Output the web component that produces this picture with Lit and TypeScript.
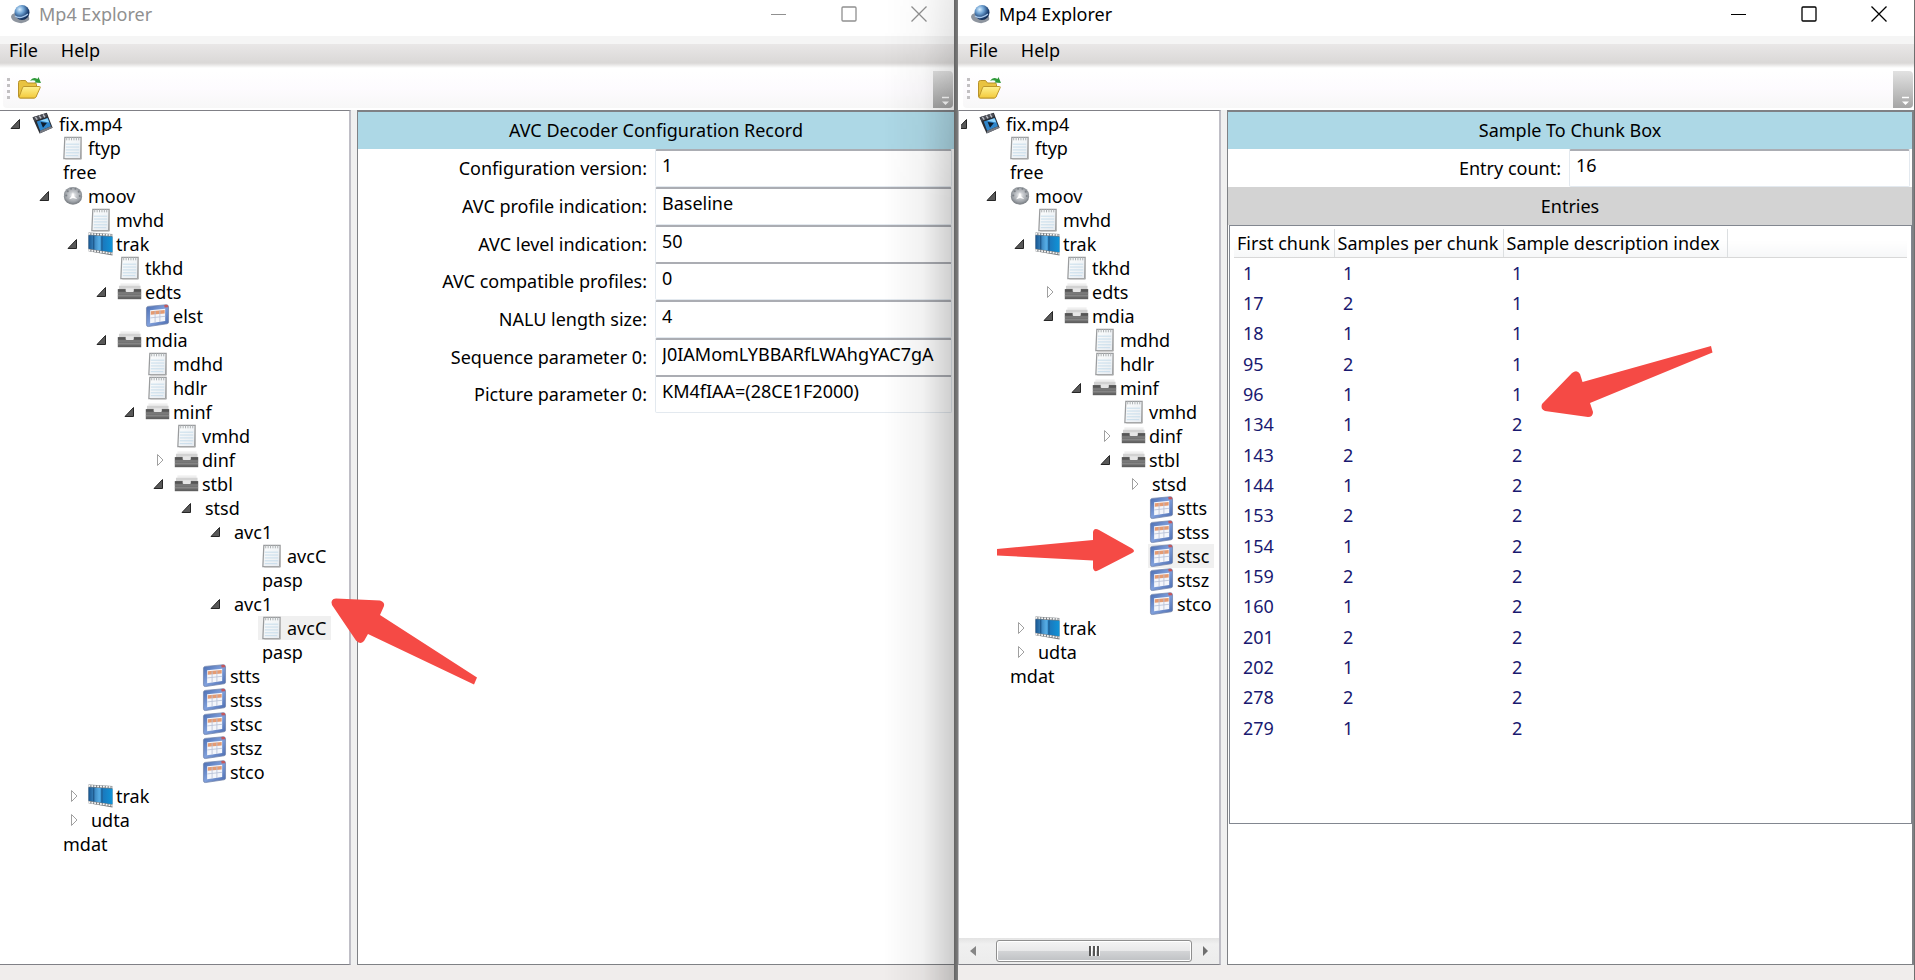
import { LitElement, html, css, svg, nothing } from "lit";
import { customElement, property, state } from "lit/decorators.js";
import { classMap } from "lit/directives/class-map.js";

type IconName = "file" | "doc" | "disc" | "film" | "drawer" | "grid";

interface TreeRow {
  depth: number;
  name: string;
  icon?: IconName;
  fold?: "open" | "closed";
}

const row = (depth: number, name: string, icon?: IconName, fold?: "open" | "closed"): TreeRow => ({
  depth,
  name,
  icon,
  fold,
});

const LEFT_TREE: TreeRow[] = [
  row(0, "fix.mp4", "file", "open"),
  row(1, "ftyp", "doc"),
  row(1, "free"),
  row(1, "moov", "disc", "open"),
  row(2, "mvhd", "doc"),
  row(2, "trak", "film", "open"),
  row(3, "tkhd", "doc"),
  row(3, "edts", "drawer", "open"),
  row(4, "elst", "grid"),
  row(3, "mdia", "drawer", "open"),
  row(4, "mdhd", "doc"),
  row(4, "hdlr", "doc"),
  row(4, "minf", "drawer", "open"),
  row(5, "vmhd", "doc"),
  row(5, "dinf", "drawer", "closed"),
  row(5, "stbl", "drawer", "open"),
  row(6, "stsd", undefined, "open"),
  row(7, "avc1", undefined, "open"),
  row(8, "avcC", "doc"),
  row(8, "pasp"),
  row(7, "avc1", undefined, "open"),
  row(8, "avcC", "doc"),
  row(8, "pasp"),
  row(6, "stts", "grid"),
  row(6, "stss", "grid"),
  row(6, "stsc", "grid"),
  row(6, "stsz", "grid"),
  row(6, "stco", "grid"),
  row(2, "trak", "film", "closed"),
  row(2, "udta", undefined, "closed"),
  row(1, "mdat"),
];

const RIGHT_TREE: TreeRow[] = [
  row(0, "fix.mp4", "file", "open"),
  row(1, "ftyp", "doc"),
  row(1, "free"),
  row(1, "moov", "disc", "open"),
  row(2, "mvhd", "doc"),
  row(2, "trak", "film", "open"),
  row(3, "tkhd", "doc"),
  row(3, "edts", "drawer", "closed"),
  row(3, "mdia", "drawer", "open"),
  row(4, "mdhd", "doc"),
  row(4, "hdlr", "doc"),
  row(4, "minf", "drawer", "open"),
  row(5, "vmhd", "doc"),
  row(5, "dinf", "drawer", "closed"),
  row(5, "stbl", "drawer", "open"),
  row(6, "stsd", undefined, "closed"),
  row(6, "stts", "grid"),
  row(6, "stss", "grid"),
  row(6, "stsc", "grid"),
  row(6, "stsz", "grid"),
  row(6, "stco", "grid"),
  row(2, "trak", "film", "closed"),
  row(2, "udta", undefined, "closed"),
  row(1, "mdat"),
];

const AVC_FIELDS: [string, string][] = [
  ["Configuration version:", "1"],
  ["AVC profile indication:", "Baseline"],
  ["AVC level indication:", "50"],
  ["AVC compatible profiles:", "0"],
  ["NALU length size:", "4"],
  ["Sequence parameter 0:", "J0IAMomLYBBARfLWAhgYAC7gA"],
  ["Picture parameter 0:", "KM4fIAA=(28CE1F2000)"],
];

const CHUNKS: [number, number, number][] = [
  [1, 1, 1],
  [17, 2, 1],
  [18, 1, 1],
  [95, 2, 1],
  [96, 1, 1],
  [134, 1, 2],
  [143, 2, 2],
  [144, 1, 2],
  [153, 2, 2],
  [154, 1, 2],
  [159, 2, 2],
  [160, 1, 2],
  [201, 2, 2],
  [202, 1, 2],
  [278, 2, 2],
  [279, 1, 2],
];

const gradients = svg`<defs>
  <linearGradient id="film" x1="0" x2="1"><stop offset="0" stop-color="#175590"/><stop offset=".45" stop-color="#58aee6"/><stop offset=".6" stop-color="#1a78bd"/><stop offset="1" stop-color="#0f94d8"/></linearGradient>
  <linearGradient id="drawer" x1="0" x2="0" y1="0" y2="1"><stop offset="0" stop-color="#4c4c4c"/><stop offset=".6" stop-color="#777"/><stop offset="1" stop-color="#5a5a5a"/></linearGradient>
  <linearGradient id="grid" x1="0" x2="1" y1="0" y2="1"><stop offset="0" stop-color="#4a6cb0"/><stop offset=".5" stop-color="#7f9fdb"/><stop offset="1" stop-color="#4868ac"/></linearGradient>
  <radialGradient id="disc"><stop offset="0" stop-color="#fff"/><stop offset=".35" stop-color="#c9ccd0"/><stop offset=".75" stop-color="#a7abb0"/><stop offset="1" stop-color="#8b9096"/></radialGradient>
  <linearGradient id="paper" x1="0" x2="1" y1="0" y2="1"><stop offset="0" stop-color="#fdfefe"/><stop offset="1" stop-color="#e6ebf0"/></linearGradient>
  <linearGradient id="fold" x1="0" x2="0" y1="0" y2="1"><stop offset="0" stop-color="#fff28f"/><stop offset="1" stop-color="#f3c93c"/></linearGradient>
</defs>`;

const ICONS: Record<IconName, unknown> = {
  file: svg`
    <path d="M1 5.5 16 .8 17.5 5 22 16.500 8.500 22.500 5.500 16Z" fill="#2b2d33"/>
    <path d="M1.500 5.500 15.500 1.200 16.500 4.500 3 9.500Z" fill="#4a4d55"/>
    <path d="m4 5 2 3M8 3.700l2 3M12 2.500l2 3" stroke="#b9bcc4" stroke-width="1.500"/>
    <path d="M5.500 10 17 6.200 20.200 14.800 9 19.500Z" fill="#2f86cb"/>
    <path d="M9 9 16.500 6.500 18.500 11Z" fill="#8fd4fb"/>
    <path d="m9.500 10.500 6.500 1-4 5z" fill="#0e1c2c"/>
    <path d="m9 19.500 11.200-4.700 1.800 1.700-13.500 6z" fill="#767a83"/>`,
  doc: svg`
    <path d="M4.500 1.500h17l-.5 22H3.500z" fill="url(#paper)" stroke="#9a9c9e" stroke-width="1.300"/>
    <path d="M21.800 2v22H5" fill="none" stroke="#b5b5b5"/>
    <path d="M6.500 1v3.500M9 1v3.500M11.500 1v3.500M14 1v3.500M16.500 1v3.500M19 1v3.500" stroke="#a9adb0"/>
    <path d="M5.500 8.500h14M5.500 11.500h14M5.500 14.500h14M5.500 17.500h14M5.500 20.500h13" stroke="#c5dbea"/>`,
  disc: svg`
    <ellipse cx="13" cy="13" rx="9.500" ry="8.500" fill="#83878c"/>
    <ellipse cx="13" cy="11.500" rx="9.500" ry="8.500" fill="url(#disc)"/>
    <g fill="#7c8187"><circle cx="7.500" cy="7.500" r="1.100"/><circle cx="11" cy="5" r="1"/><circle cx="15.500" cy="5" r="1"/><circle cx="19" cy="8" r="1.100"/><circle cx="6" cy="12" r="1.100"/><circle cx="20" cy="12.500" r="1"/></g>
    <path d="M13 8.500 14.500 13l3 2.500-4.500-.8-4 1.300 2.500-3.500z" fill="#fff"/>`,
  film: svg`
    <path d="M0 .5 25 2v22.500L0 20z" fill="#74797d"/>
    <path d="M0 3.500 25 5v16L0 17.500z" fill="url(#film)"/>
    <path d="M0 1.900 25 3.300M0 18.900l25 3.600" stroke="#f6f6f6" stroke-width="1.800" stroke-dasharray="2 1"/>
    <path d="M5.500 3.800V18M14 4.400v15" stroke="#174d7d"/>`,
  drawer: svg`
    <path d="M3 3.500h20v6H3z" fill="#efefef"/><path d="M1.500 6h22.500v5h-22.500z" fill="#d2d2d2"/>
    <path d="M.3 9.500h24.400v10.500H.3z" fill="url(#drawer)"/>
    <path d="M8.500 8.500h8.500v3q0 1-1 1H9.500q-1 0-1-1z" fill="#e6e6e6"/>
    <path d="M.3 13.500h24.400M.3 16.500h24.400" stroke="#9a9a9a" stroke-width=".7"/>`,
  grid: svg`
    <path d="M3 2.500 21.500.8q2.500 0 2.500 2v16q0 1.500-1.500 1.800L3 23.500q-2 0-2-2V4.500q0-1.800 2-2z" fill="url(#grid)" stroke="#7385ad" stroke-width=".8"/>
    <path d="M4.800 6.500 20.500 5v12.800L4.800 20z" fill="#f4f6fb"/>
    <path d="M5.500 7.500 20 6.200v3.800L5.500 11.300z" fill="#e59b72"/>
    <path d="M10 7.500v12M15 7v11.800M5 14.500l15.500-1.700" stroke="#b8c1d8" stroke-width=".9"/>
    <path d="m19.500 1 2.500-.2q1.500 0 1.500 1.500v1l-3.500.3z" fill="#c4585c"/>`,
};

/** Hierarchical list of the boxes found in the opened file. */
@customElement("box-tree")
export class BoxTree extends LitElement {
  @property({ attribute: false }) rows: TreeRow[] = [];
  @property({ type: Number }) selected = -1;

  static styles = css`
    :host { display: block; }
    .tree { list-style: none; margin: 0; padding: 0; }
    .item { display: flex; align-items: center; height: 24px; white-space: nowrap; }
    .fold { box-sizing: border-box; width: 30px; height: 24px; flex: none; padding: 0 0 0 10px; border: 0; background: none; text-align: left; }
    .fold svg { display: block; }
    .label { display: flex; align-items: center; gap: 3px; height: 24px; padding: 0 5px 0 4px; }
    .label.with-icon { padding-left: 1px; }
    .label.selected { background: #f0f0f0; }
    .icon { width: 25px; height: 24px; flex: none; overflow: visible; }
  `;

  render() {
    return html`<ul class="tree" role="tree">
      ${this.rows.map(
        (r, i) => html`<li class="item" role="treeitem" aria-level=${r.depth + 1}
          aria-selected=${i === this.selected ? "true" : "false"}
          style="padding-left:${Math.round((r.depth * 57) / 2)}px" @click=${() => (this.selected = i)}>
          ${r.fold
            ? html`<button class="fold" aria-label="Toggle ${r.name}">
                <svg width="12" height="14" viewBox="0 0 12 14">
                  ${r.fold === "open"
                    ? svg`<path d="M1 11.500h8.500v-9z" fill="#595959" stroke="#262626"/>`
                    : svg`<path d="M4.500 1.500v11L10 7z" fill="#fff" stroke="#a0a0a0"/>`}
                </svg>
              </button>`
            : html`<span class="fold"></span>`}
          <span class=${classMap({ label: true, "with-icon": !!r.icon, selected: i === this.selected })}>
            ${r.icon ? html`<svg class="icon" viewBox="0 0 25 25" aria-hidden="true">${gradients}${ICONS[r.icon]}</svg>` : nothing}
            <span>${r.name}</span>
          </span>
        </li>`
      )}
    </ul>`;
  }
}

/** Window frame: caption, menu, toolbar, tree pane, detail pane, status strip. */
@customElement("explorer-window")
export class ExplorerWindow extends LitElement {
  @property({ attribute: false }) rows: TreeRow[] = [];
  @property({ type: Number }) selected = -1;
  @property({ type: Boolean, reflect: true }) active = false;

  static styles = css`
    :host { display: flex; flex-direction: column; position: relative; min-width: 0; height: 100%; overflow: hidden; background: #fff; --inset: 0px; --tree: 351px; }
    :host([active]) { --inset: 2px; --tree: 263px; border-right: 1px solid #6f6f6f; }
    button { font: inherit; color: inherit; border: 0; background: none; padding: 0; }
    .caption { display: flex; align-items: center; height: 27px; padding: 0 0 9px calc(11px + var(--inset)); color: #909090; }
    :host([active]) .caption { color: #000; }
    .logo { width: 20px; height: 20px; margin-right: 8px; }
    .title { flex: 1; }
    .control { width: 70px; height: 27px; display: grid; place-items: center; }
    .menu { display: flex; gap: 23px; height: 33px; padding-left: calc(9px + var(--inset)); flex: none;
      background: linear-gradient(#f5f5f5 0 8px, #e9e7e7 8px, #dad8d7 27px, #fff 32px); }
    .menu button { height: 28px; }
    .toolbar { display: flex; align-items: center; height: 37px; margin: 2px 1px 2px calc(3px + var(--inset)); flex: none;
      border-radius: 4px; background: linear-gradient(#fff, #fdfbfe 50%, #f7f7f7); }
    .grip { width: 3px; height: 21px; margin: 0 7px 2px 4px; background: repeating-linear-gradient(#c2c0c2 0 3px, transparent 3px 6px); }
    .open { margin-bottom: 3px; }
    .open svg { display: block; }
    .overflow { margin-left: auto; width: 20px; height: 37px; border-radius: 0 4px 4px 0; background: linear-gradient(#e2e2e2, #a5a5a5); }
    .overflow svg { display: block; }
    .work { display: grid; grid-template-columns: var(--tree) 6px minmax(0, 1fr); flex: 1; min-height: 0; background: #f0f0f0; }
    .nav { display: flex; flex-direction: column; min-width: 0; border: solid #808086; border-width: 1px 2px 1px 0; border-right-color: #bfbec6; background: #fff; }
    :host([active]) .nav { border-left: 1px solid #b5b5b8; }
    .viewport { flex: 1; min-height: 0; overflow: hidden; padding-top: 1px; }
    :host([active]) .viewport { margin-left: 2px; }
    :host([active]) box-tree { margin-left: -14px; }
    .scroll { display: flex; align-items: center; height: 26px; background: linear-gradient(#e3e3e3, #f0f0f0 6px, #ececec); }
    .arrow { width: 27px; height: 26px; display: grid; place-items: center; flex: none; }
    .arrow:first-child { margin-right: 10px; }
    .thumb { flex: 1; height: 22px; box-sizing: border-box; display: flex; justify-content: center; align-items: center; gap: 1px;
      border: 1px solid #8f8f8f; border-radius: 3px; box-shadow: inset 0 0 0 1px #fff; background: linear-gradient(#f4f4f4, #e8e8e9 50%, #d3d4d6 50%, #bfc1c4); }
    .thumb i { width: 2px; height: 10px; border-right: 1px solid #fff; background: #555; }
    .detail { min-width: 0; overflow: hidden; border: solid #7f8185; border-width: 2px 0 1px 1px; background: #fff; }
    :host([active]) .detail { border-right: 2px solid #7f8185; }
    .status { height: 15px; flex: none; background: #f0edec; }
    .shade { position: absolute; top: 0; right: 0; width: 70px; height: 100%; pointer-events: none;
      background: linear-gradient(90deg, transparent, rgba(0, 0, 0, 0.05) 55%, rgba(0, 0, 0, 0.2));
      mask-image: linear-gradient(rgba(0, 0, 0, 0.4), #000 200px); }
    :host([active]) .shade { display: none; }
  `;

  render() {
    return html`
      <header class="caption">
        <svg class="logo" viewBox="0 0 20 20" aria-hidden="true">
          <defs><radialGradient id="orb" cx=".35" cy=".3" r=".8"><stop offset="0" stop-color="#d8efff"/><stop offset=".35" stop-color="#6c9fd0"/><stop offset=".7" stop-color="#1f4375"/><stop offset="1" stop-color="#0c1d3d"/></radialGradient></defs>
          <path d="M0 13q0-3 4-4l12 1q3 2 2 6-6 5-13 2-4-1-5-5z" fill="#8e959f"/>
          <circle cx="11" cy="8.500" r="7.500" fill="url(#orb)"/>
          <path d="M4 12q5 4 13-2" stroke="#a9c8ea" stroke-width="1.500" fill="none"/>
        </svg>
        <span class="title">Mp4 Explorer</span>
        <button class="control" aria-label="Minimize"><svg width="16" height="16" fill="none" stroke="currentColor"><path d="M0 8.500h15"/></svg></button>
        <button class="control" aria-label="Maximize"><svg width="16" height="16" fill="none" stroke="currentColor"><rect x="1" y="1" width="14" height="14" rx="1" stroke-width="1.300"/></svg></button>
        <button class="control" aria-label="Close"><svg width="16" height="16" fill="none" stroke="currentColor"><path d="m.5.5 15 15m0-15-15 15" stroke-width="1.300"/></svg></button>
      </header>
      <nav class="menu"><button>File</button><button>Help</button></nav>
      <div class="toolbar">
        <span class="grip"></span>
        <button class="open" aria-label="Open">
          <svg width="25" height="24" viewBox="0 0 25 24">
            ${gradients}
            <path d="M1.500 6.500q0-2 2-2h5l2 2.500h7.500q1.500 0 1.500 1.500V20l-2 2h-14q-2 0-2-2z" fill="#e9c341" stroke="#b8922a"/>
            <path d="M7 10.500h15.500q1.200 0 .6 1.300l-4 9q-.5 1.200-1.800 1.200H3q-1.200 0-.8-1.300l3.300-8.900q.4-1.300 1.500-1.300z" fill="url(#fold)" stroke="#bf982c"/>
            <path d="M13 5q3-5 7.500-2l1-2L24 7l-6.500-.5 1.200-1.500Q16 3.500 13 5z" fill="#2f9a3a"/>
          </svg>
        </button>
        <button class="overflow" aria-label="More tools">
          <svg width="20" height="37"><path d="M9 26.500h7" stroke="#fff" stroke-width="1.500"/><path d="M9 30.500h7L12.500 34z" fill="#fff"/></svg>
        </button>
      </div>
      <main class="work">
        <section class="nav">
          <div class="viewport"><box-tree .rows=${this.rows} .selected=${this.selected}></box-tree></div>
          ${this.active
            ? html`<div class="scroll">
                <button class="arrow" aria-label="Scroll left"><svg width="14" height="12"><path d="M10 1v10L4 6z" fill="#858585"/></svg></button>
                <div class="thumb"><i></i><i></i><i></i></div>
                <button class="arrow" aria-label="Scroll right"><svg width="14" height="12"><path d="M4 1v10l5-5z" fill="#6f6f6f"/></svg></button>
              </div>`
            : nothing}
        </section>
        <span></span>
        <section class="detail"><slot></slot></section>
      </main>
      <footer class="status"></footer>
      <div class="shade"></div>
    `;
  }
}

@customElement("app-root")
export class AppRoot extends LitElement {
  @state() private fields = AVC_FIELDS;
  @state() private chunks = CHUNKS;

  static styles = css`
    :host { display: grid; grid-template-columns: minmax(0, 954fr) 4px minmax(0, 957fr); position: relative; height: 100vh; overflow: hidden;
      font: 18px/22px "Noto Sans", "Open Sans", sans-serif; color: #000; background: #fff; }
    .divider { background: linear-gradient(90deg, #636363, #7d7d7d); }
    .heading { margin: 0; height: 37px; line-height: 36px; font-size: 18px; font-weight: 400; text-align: center; background: #add8e6; }
    .heading.sub { height: 38px; line-height: 38px; background: #d3d3d3; }
    .field { display: grid; grid-template-columns: 1fr 1fr; height: 38px; padding-right: 2px; }
    .field:nth-of-type(3n) { height: 37px; }
    .name { line-height: 38px; padding-right: 8px; text-align: right; white-space: nowrap; }
    .value { min-width: 0; box-sizing: border-box; width: 100%; height: 100%; margin: 0; padding: 0 4px 8px 6px; font: inherit; color: inherit; background: #fff;
      border: 1px solid #e3e9ef; border-top: 2px solid #abadb3; border-radius: 2px; outline: 0; }
    .list { box-sizing: border-box; min-height: 599px; margin: 0 0 0 1px; padding: 3px 4px; border: 1px solid #828790; }
    .table { width: 100%; table-layout: fixed; border-collapse: collapse; }
    .c1 { width: 100px; } .c2 { width: 169px; } .c3 { width: 224px; }
    th { box-sizing: border-box; height: 28px; padding: 0 0 0 3px; font-weight: 400; text-align: left; white-space: nowrap;
      border-right: 1px solid #dcdfe1; border-bottom: 1px solid #d8d8d8; background: linear-gradient(#fff 40%, #f6f7f8); }
    th:last-child { border-right: 0; }
    td { height: 30px; padding: 0 0 0 9px; color: #191970; }
    tr:nth-child(3n) td { height: 31px; }
    .pointer { position: absolute; fill: #f54a45; pointer-events: none; }
    .at-avcc { left: 330px; top: 598px; }
    .at-stsc { left: 996px; top: 528px; }
    .at-index { left: 1540px; top: 345px; }
  `;

  render() {
    return html`
      <explorer-window .rows=${LEFT_TREE} .selected=${21}>
        <h2 class="heading">AVC Decoder Configuration Record</h2>
        ${this.fields.map(
          ([name, value], i) => html`<div class="field">
            <label class="name" for="avc-${i}">${name}</label>
            <input class="value" id="avc-${i}" readonly .value=${value} />
          </div>`
        )}
      </explorer-window>
      <div class="divider"></div>
      <explorer-window active .rows=${RIGHT_TREE} .selected=${18}>
        <h2 class="heading">Sample To Chunk Box</h2>
        <div class="field">
          <label class="name" for="count">Entry count:</label>
          <input class="value" id="count" readonly .value=${String(this.chunks.length)} />
        </div>
        <h3 class="heading sub">Entries</h3>
        <section class="list">
          <table class="table">
            <colgroup><col class="c1" /><col class="c2" /><col class="c3" /><col /></colgroup>
            <thead>
              <tr><th>First chunk</th><th>Samples per chunk</th><th>Sample description index</th><th></th></tr>
            </thead>
            <tbody>
              ${this.chunks.map((c) => html`<tr>${c.map((n) => html`<td>${n}</td>`)}<td></td></tr>`)}
            </tbody>
          </table>
        </section>
      </explorer-window>
      <svg class="pointer at-avcc" width="150" height="90" viewBox="330 598 150 90" aria-hidden="true">
        <path d="M336 598.500 380 600.500Q385 602 384 606L380 615 477 677.500 474 684.500 368 634 364 641Q360 645 356 640.500L332 605Q330 599 336 598.500Z"/>
      </svg>
      <svg class="pointer at-stsc" width="140" height="44" viewBox="996 528 140 44" aria-hidden="true">
        <path d="M997 549 1093 540V532Q1094 527 1099 530L1132 548.500Q1136 551 1132 553L1099 570Q1094 573 1093 568V560.500L997 555.500Z"/>
      </svg>
      <svg class="pointer at-index" width="174" height="74" viewBox="1540 345 174 74" aria-hidden="true">
        <path d="M1711 346 1712.500 352.500 1590 403 1593 412Q1593 417 1588 417L1545 411Q1540 409 1542 404L1572 373Q1577 369 1580 374L1582.500 382Z"/>
      </svg>
    `;
  }
}
